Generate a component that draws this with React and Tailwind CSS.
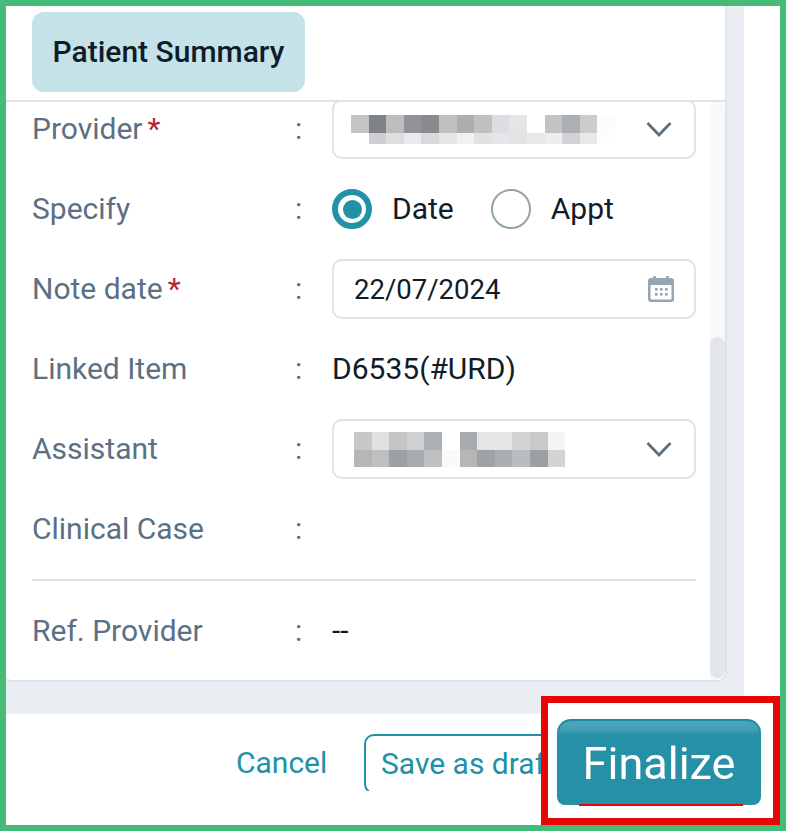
const providerBlur = [
  ["#c4c4c6","#7f8286","#bcbdbf","#919396","#888a8d","#bfc0c2","#acafb1","#bfc0c2","#dcdde0","#e4e5e7","#ffffff","#c2c3c5","#adb0b2","#cbccce","#fcfcfc"],
  ["#ffffff","#cfcfd1","#dedee0","#ebebed","#d9d9db","#e5e5e7","#f0f1f1","#e2e2e4","#e6e6e8","#e3e3e5","#e8e8ea","#eeeef0","#d2d2d5","#e8e9e9","#fdfdfd"],
];
const assistantBlur = [
  ["#c8c8ca","#e0e2e1","#c4c5c7","#cfd0d2","#adb0b2","#ffffff","#a8abad","#e4e5e7","#e6e8e7","#d3d4d6","#c9cacc","#f4f4f4"],
  ["#b5b6b8","#bebfc1","#9da0a2","#a8acaf","#bfc0c2","#fafafa","#b5b6b8","#9fa2a5","#abafb1","#b9bdc0","#9da0a2","#d3d4d6"],
];

function Blur({ rows, rowHeights, className }) {
  const cell = 17.6;
  const width = rows[0].length * cell;
  const height = rowHeights[0] + rowHeights[1];
  return (
    <svg width={width} height={height} viewBox={`0 0 ${width} ${height}`} className={className} shapeRendering="crispEdges">
      {rows.map((row, r) =>
        row.map((c, i) => (
          <rect key={`${r}-${i}`} x={i * cell} y={r === 0 ? 0 : rowHeights[0]} width={cell + 0.5} height={rowHeights[r]} fill={c} />
        ))
      )}
    </svg>
  );
}

function Chevron() {
  return (
    <svg width="26" height="16" viewBox="0 0 26 16" fill="none" className="shrink-0">
      <path d="M1.5 2 L13 14 L24.5 2" stroke="#5c7084" strokeWidth="2.8" />
    </svg>
  );
}

function CalendarIcon() {
  return (
    <svg width="26" height="26" viewBox="0 0 26 26" className="shrink-0 -mr-[2px]">
      <rect x="5" y="0" width="3" height="5" rx="1.2" fill="#94a6b3" />
      <rect x="18" y="0" width="3" height="5" rx="1.2" fill="#94a6b3" />
      <rect x="0" y="2" width="26" height="24" rx="3" fill="#94a6b3" />
      <rect x="2.5" y="9" width="21" height="14.5" rx="1" fill="#ffffff" />
      {[7, 12, 17].map((x) =>
        [12, 17].map((y) => <rect key={`${x}-${y}`} x={x} y={y} width="2.6" height="2.6" fill="#94a6b3" />)
      )}
    </svg>
  );
}

function Row({ label, required, children }) {
  return (
    <div className="flex items-center pl-[26px] h-[60px] mb-[20px]">
      <div className="w-[263px] shrink-0 flex items-center text-[#5c7084]">
        <span>{label}</span>
        {required && <span className="text-[#b3262b] ml-[5px]">*</span>}
      </div>
      <div className="w-[37px] shrink-0 text-[#5c7084]">:</div>
      <div className="w-[364px] shrink-0 flex items-center text-[#101c28]">{children}</div>
    </div>
  );
}

function Field({ children }) {
  return (
    <div className="w-full h-[60px] rounded-[10px] border-2 border-[#dde3eb] bg-white flex items-center justify-between pr-[22px]">
      {children}
    </div>
  );
}

export default function App() {
  return (
    <div
      className="relative w-[786px] h-[831px] border-[6px] border-[#45bb78] bg-white overflow-hidden flex flex-col text-[30px] leading-[36px]"
      style={{ fontFamily: "Roboto, sans-serif" }}
    >
      <div className="w-[738px] h-[708px] shrink-0 bg-[#eaedf1] pb-[32px]">
        <div className="w-[721px] h-[676px] bg-white border-r-2 border-b-2 border-[#dde3eb] rounded-br-[10px] rounded-bl-[6px] flex flex-col overflow-hidden">
          <div className="h-[96px] shrink-0 border-b-2 border-[#dde3eb] pl-[26px] pt-[6px]">
            <div className="w-[273px] h-[80px] rounded-[12px] bg-[#c5e2e8] flex items-center justify-center font-medium text-[#101c28]">
              Patient Summary
            </div>
          </div>
          <div className="flex flex-1 min-h-0">
            <div className="flex-1 min-w-0 overflow-hidden">
              <div className="-mt-[3px]">
                <Row label="Provider" required>
                  <Field>
                    <Blur rows={providerBlur} rowHeights={[18, 11]} className="ml-[17px] mt-[1px]" />
                    <Chevron />
                  </Field>
                </Row>
                <Row label="Specify">
                  <div className="w-[40px] h-[40px] rounded-full border-[6px] border-[#2091a6] flex items-center justify-center shrink-0">
                    <div className="w-[19px] h-[19px] rounded-full bg-[#2091a6]" />
                  </div>
                  <span className="ml-[20px]">Date</span>
                  <div className="ml-[37px] w-[40px] h-[40px] rounded-full border-2 border-[#8fa3b1] shrink-0" />
                  <span className="ml-[20px]">Appt</span>
                </Row>
                <Row label="Note date" required>
                  <Field>
                    <span className="ml-[20px] pt-[1px] text-[27.5px]">22/07/2024</span>
                    <CalendarIcon />
                  </Field>
                </Row>
                <Row label="Linked Item">
                  <span>D6535(#URD)</span>
                </Row>
                <Row label="Assistant">
                  <Field>
                    <Blur rows={assistantBlur} rowHeights={[18, 17]} className="ml-[20px]" />
                    <Chevron />
                  </Field>
                </Row>
                <Row label="Clinical Case" />
                <div className="ml-[26px] w-[664px] h-[2px] mb-[20px] bg-[#dde3eb]" />
                <Row label="Ref. Provider">
                  <span>--</span>
                </Row>
              </div>
            </div>
            <div className="w-[15px] shrink-0 bg-[#f7f8fa] rounded-t-[8px] flex flex-col justify-end pb-[2px]">
              <div className="h-[341px] bg-[#e2e6ea] rounded-t-[8px] rounded-b-[8px]" />
            </div>
          </div>
        </div>
      </div>

      <div className="flex-1 flex items-start pt-[20px] pl-[230px] text-[#2091a6]">
        <button className="h-[57px] flex items-center w-[90px] shrink-0">Cancel</button>
        <div className="ml-[38px] h-[57px] w-[220px] overflow-hidden shrink-0">
          <div className="h-[60px] border-2 border-[#2091a6] rounded-[10px] pl-[15px] flex items-center whitespace-nowrap">
            Save as draft
          </div>
        </div>
      </div>

      <div className="absolute left-[535px] top-[690px] w-[239px] h-[129px] border-[7px] border-[#e60606] bg-white pl-[9px] pt-[16px]">
        <div className="relative w-[204px] h-[86px] rounded-t-[14px] rounded-b-[8px] border-t-2 border-[#2088a0] bg-[#2690a6] flex items-center justify-center text-white text-[45px] leading-[52px] overflow-hidden">
          <div className="absolute left-[2px] right-[2px] top-0 h-[15px] bg-linear-to-b from-[#4ba6ba] via-[#44a1b5] to-[#2690a6] rounded-t-[12px]" />
          <span className="relative pt-[1px] blur-[0.4px]">Finalize</span>
        </div>
        <div className="absolute left-[31px] top-[101px] w-[164px] h-[2px] bg-[#e60606]" />
      </div>
    </div>
  );
}
